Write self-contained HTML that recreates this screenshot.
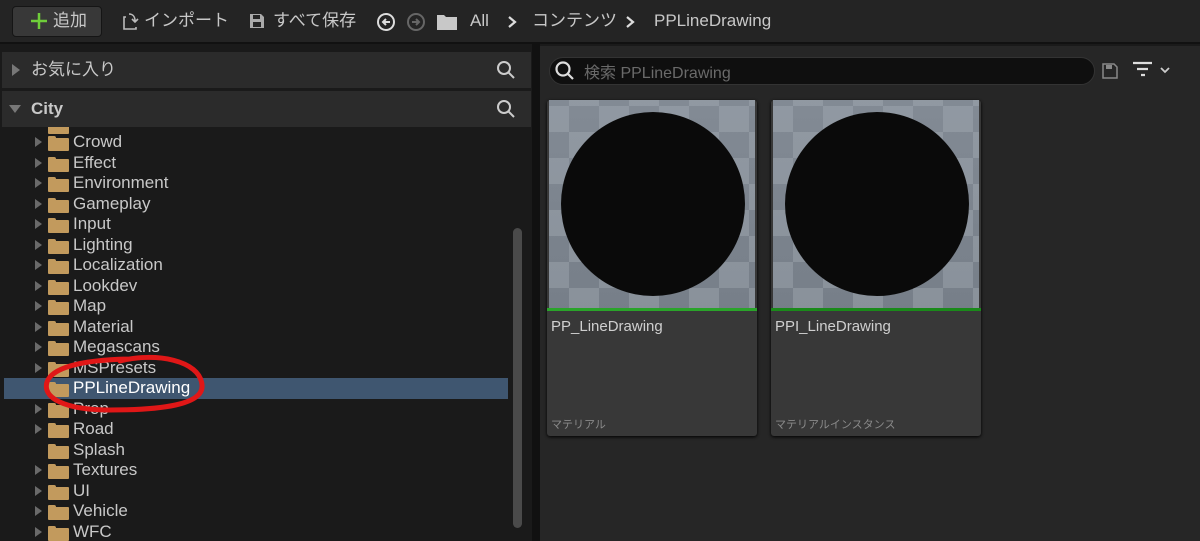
<!DOCTYPE html>
<html><head><meta charset="utf-8"><style>
*{margin:0;padding:0;box-sizing:border-box}
body{width:1200px;height:541px;background:#1a1a1a;font-family:"Liberation Sans","Noto Sans CJK JP",sans-serif;color:#c0c0c0;position:relative;overflow:hidden}
.abs{position:absolute}
.tb{left:0;top:0;width:1200px;height:44px;background:#242424;border-bottom:2px solid #111}
.tb span{position:absolute;top:10px;font-size:17px;line-height:22px;height:22px;color:#c8c8c8}
.hdr{left:2px;width:529px;height:36px;background:#2b2b2b;font-size:17px;color:#c8c8c8}
.hdr span{line-height:36px;top:0!important}
.row{position:absolute;left:0;width:510px;height:20.5px;font-size:17px;line-height:20px;color:#c8c8c8}
.row .ar{position:absolute;left:35px;top:5px;width:0;height:0;border-left:7px solid #6a6a6a;border-top:5px solid transparent;border-bottom:5px solid transparent}
.row .fd{position:absolute;left:48px;top:6px;width:21px;height:13px;background:#c29a5d;border-radius:1px}
.row .fd:before{content:"";position:absolute;left:0;top:-2px;width:8px;height:3px;background:#c29a5d;border-radius:1px 2px 0 0}
.row .t{position:absolute;left:73px;top:0}
.card{top:100px;width:210px;height:336px;background:#383838;border-radius:3px;box-shadow:0 1px 3px #000}
.th{position:absolute;left:2px;top:0;width:206px;height:208px;overflow:hidden;
background:
linear-gradient(180deg,rgba(150,158,168,.35),rgba(110,118,128,.15)),
repeating-conic-gradient(#8e969f 0 25%,#78808a 0 50%) -10px -20px/60px 52px}
.ci{position:absolute;left:12px;top:12px;width:184px;height:184px;border-radius:50%;background:#0a0a0a}
.gl{position:absolute;left:0;top:208px;width:210px;height:3px;background:#2aa42a}
.nm{position:absolute;left:4px;top:218px;font-size:15px;color:#cfcfcf}
.ty{position:absolute;left:4px;top:316px;font-size:11px;color:#8a8a8a}
</style></head><body>
<div class="abs tb">
 <div class="abs" style="left:12px;top:6px;width:90px;height:31px;background:#383838;border:1px solid #151515;border-radius:4px"></div>
 <svg class="abs" style="left:30px;top:12px" width="18" height="18" viewBox="0 0 18 18"><path d="M9 1v16M1 9h16" stroke="#6fce3a" stroke-width="2.5"/></svg>
 <span style="left:53px">追加</span>
 <svg class="abs" style="left:121px;top:12px" width="20" height="20" viewBox="0 0 20 20"><path d="M5 5H3v12h12v-2M8 2c4 0 6 3 6 7M11 7l3 3 3-3" stroke="#bbb" stroke-width="1.6" fill="none"/></svg>
 <span style="left:144px">インポート</span>
 <svg class="abs" style="left:248px;top:12px" width="18" height="18" viewBox="0 0 18 18"><path d="M2 2h11l3 3v11H2z" fill="#aaa"/><rect x="5" y="3" width="7" height="4" fill="#242424"/><rect x="5" y="10" width="8" height="5" fill="#242424"/></svg>
 <span style="left:273px">すべて保存</span>
 <svg class="abs" style="left:376px;top:12px" width="20" height="20" viewBox="0 0 20 20"><circle cx="10" cy="10" r="8" stroke="#ddd" stroke-width="2" fill="none"/><path d="M14 10H7M10 7l-3 3 3 3" stroke="#ddd" stroke-width="2" fill="none"/></svg>
 <svg class="abs" style="left:406px;top:12px" width="20" height="20" viewBox="0 0 20 20"><circle cx="10" cy="10" r="8" stroke="#666" stroke-width="2" fill="none"/><path d="M6 10h7M10 7l3 3-3 3" stroke="#666" stroke-width="2" fill="none"/></svg>
 <svg class="abs" style="left:436px;top:13px" width="22" height="18" viewBox="0 0 22 18"><path d="M1 2h7l2 2h11v13H1z" fill="#c8c8c8"/></svg>
 <span style="left:470px">All</span>
 <svg class="abs" style="left:506px;top:15px" width="12" height="14" viewBox="0 0 12 14"><path d="M3 2l6 5-6 5" stroke="#ddd" stroke-width="2.2" fill="none"/></svg>
 <span style="left:532px">コンテンツ</span>
 <svg class="abs" style="left:624px;top:15px" width="12" height="14" viewBox="0 0 12 14"><path d="M3 2l6 5-6 5" stroke="#ddd" stroke-width="2.2" fill="none"/></svg>
 <span style="left:654px">PPLineDrawing</span>
</div>
<div class="abs hdr" style="top:52px">
 <div class="abs" style="left:10px;top:12px;border-left:8px solid #777;border-top:6px solid transparent;border-bottom:6px solid transparent"></div>
 <span class="abs" style="left:29px">お気に入り</span>
 <svg class="abs" style="left:494px;top:8px" width="20" height="20" viewBox="0 0 20 20"><circle cx="8" cy="8" r="6" stroke="#ccc" stroke-width="2" fill="none"/><path d="M12.5 12.5L18 18" stroke="#ccc" stroke-width="2"/></svg>
</div>
<div class="abs hdr" style="top:91px">
 <div class="abs" style="left:7px;top:14px;border-top:8px solid #777;border-left:6px solid transparent;border-right:6px solid transparent"></div>
 <span class="abs" style="left:29px;font-weight:bold">City</span>
 <svg class="abs" style="left:494px;top:8px" width="20" height="20" viewBox="0 0 20 20"><circle cx="8" cy="8" r="6" stroke="#ccc" stroke-width="2" fill="none"/><path d="M12.5 12.5L18 18" stroke="#ccc" stroke-width="2"/></svg>
</div>
<div class="abs" style="left:0;top:127px;width:532px;height:414px;overflow:hidden">
 <div class="abs" style="left:4px;top:251px;width:504px;height:21px;background:#3f5670"></div>
 <div class="row" style="top:-12px"><div class="fd"></div></div>
 <div class="row" style="top:5px"><div class="ar"></div><div class="fd"></div><div class="t">Crowd</div></div>
 <div class="row" style="top:25.5px"><div class="ar"></div><div class="fd"></div><div class="t">Effect</div></div>
 <div class="row" style="top:46px"><div class="ar"></div><div class="fd"></div><div class="t">Environment</div></div>
 <div class="row" style="top:66.5px"><div class="ar"></div><div class="fd"></div><div class="t">Gameplay</div></div>
 <div class="row" style="top:87px"><div class="ar"></div><div class="fd"></div><div class="t">Input</div></div>
 <div class="row" style="top:107.5px"><div class="ar"></div><div class="fd"></div><div class="t">Lighting</div></div>
 <div class="row" style="top:128px"><div class="ar"></div><div class="fd"></div><div class="t">Localization</div></div>
 <div class="row" style="top:148.5px"><div class="ar"></div><div class="fd"></div><div class="t">Lookdev</div></div>
 <div class="row" style="top:169px"><div class="ar"></div><div class="fd"></div><div class="t">Map</div></div>
 <div class="row" style="top:189.5px"><div class="ar"></div><div class="fd"></div><div class="t">Material</div></div>
 <div class="row" style="top:210px"><div class="ar"></div><div class="fd"></div><div class="t">Megascans</div></div>
 <div class="row" style="top:230.5px"><div class="ar"></div><div class="fd"></div><div class="t">MSPresets</div></div>
 <div class="row" style="top:251px"><div class="fd"></div><div class="t" style="color:#fff">PPLineDrawing</div></div>
 <div class="row" style="top:271.5px"><div class="ar"></div><div class="fd"></div><div class="t">Prop</div></div>
 <div class="row" style="top:292px"><div class="ar"></div><div class="fd"></div><div class="t">Road</div></div>
 <div class="row" style="top:312.5px"><div class="fd"></div><div class="t">Splash</div></div>
 <div class="row" style="top:333px"><div class="ar"></div><div class="fd"></div><div class="t">Textures</div></div>
 <div class="row" style="top:353.5px"><div class="ar"></div><div class="fd"></div><div class="t">UI</div></div>
 <div class="row" style="top:374px"><div class="ar"></div><div class="fd"></div><div class="t">Vehicle</div></div>
 <div class="row" style="top:394.5px"><div class="ar"></div><div class="fd"></div><div class="t">WFC</div></div>
 <div class="abs" style="left:513px;top:101px;width:9px;height:300px;background:#4a4a4a;border-radius:5px"></div>
</div>
<svg class="abs" style="left:0;top:0" width="540" height="541"><path d="M120 361C155 352 200 360 202 385C204 405 160 410 110 410C65 410 42 398 47 382C52 368 80 360 130 359" stroke="#e01717" stroke-width="5" fill="none" stroke-linecap="round"/></svg>
<div class="abs" style="left:532px;top:44px;width:8px;height:497px;background:#111"></div>
<div class="abs" style="left:540px;top:46px;width:660px;height:495px;background:#262626">
 <div class="abs" style="left:9px;top:11px;width:546px;height:28px;background:#0f0f0f;border:1px solid #333;border-radius:14px"></div>
 <svg class="abs" style="left:14px;top:14px" width="22" height="22" viewBox="0 0 22 22"><circle cx="9" cy="9" r="6.5" stroke="#ddd" stroke-width="2.2" fill="none"/><path d="M14 14l5 5" stroke="#ddd" stroke-width="2.2"/></svg>
 <span class="abs" style="left:44px;top:13px;font-size:16px;color:#6a6a6a">検索 PPLineDrawing</span>
 <svg class="abs" style="left:562px;top:17px" width="16" height="16" viewBox="0 0 16 16"><path d="M1 1h11l3 3v11H1z" stroke="#888" stroke-width="1.5" fill="none"/><rect x="4" y="2" width="6" height="4" fill="#888"/></svg>
 <svg class="abs" style="left:593px;top:15px" width="40" height="20" viewBox="0 0 40 20"><path d="M0 2h19M4 8h11M8 14h4" stroke="#ddd" stroke-width="2.2"/><path d="M28 7l4 4 4-4" stroke="#ccc" stroke-width="1.8" fill="none"/></svg>
</div>
<div class="abs card" style="left:547px"><div class="th"><div class="ci"></div></div><div class="gl"></div><div class="nm">PP_LineDrawing</div><div class="ty">マテリアル</div></div>
<div class="abs card" style="left:771px"><div class="th"><div class="ci"></div></div><div class="gl" style="background:#1a8a1a"></div><div class="nm">PPI_LineDrawing</div><div class="ty">マテリアルインスタンス</div></div>
</body></html>
